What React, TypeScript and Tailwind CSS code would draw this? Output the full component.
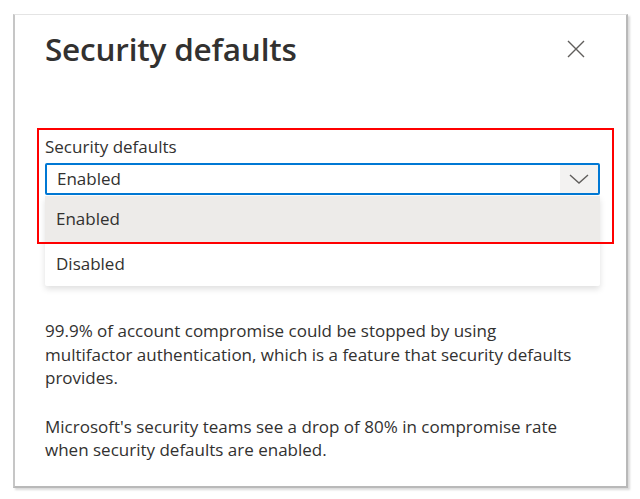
import React from "react";

export default function App() {
  const font = { fontFamily: '"Open Sans", "Noto Sans", Arial, sans-serif' };
  return (
    <div className="w-[640px] h-[499px] bg-white relative overflow-hidden" style={font}>
      <div className="absolute left-[13px] top-[14px] w-[615px] h-[474px] bg-white border-t border-t-[#e4e4e4] border-l-2 border-l-[#c6c6c6] border-r-2 border-r-[#b9b9b9] border-b-2 border-b-[#b9b9b9] shadow-[2px_2px_2px_rgba(0,0,0,0.15)] flex flex-col pl-[30px] pr-[26px] text-[#323130]">
        <div className="flex items-start justify-between pt-[13px]">
          <h1 className="text-[31.5px] leading-[42px] font-semibold tracking-[-0.2px]">Security defaults</h1>
          <button className="mt-[11px] mr-[14px] w-[20px] h-[20px] flex items-center justify-center">
            <svg width="18" height="18" viewBox="0 0 18 18" fill="none" stroke="#605e5c" strokeWidth="1.4">
              <path d="M1 1 L17 17 M17 1 L1 17" />
            </svg>
          </button>
        </div>
        <div className="mt-[66px] w-[555px] flex flex-col">
          <label className="text-[17px] leading-[22px]">Security defaults</label>
          <div className="mt-[5px] h-[32px] border-2 border-[#0078d4] rounded-[2px] flex items-stretch">
            <div className="flex-1 pl-[10px] flex items-center text-[17px]">Enabled</div>
            <div className="w-[38px] bg-[#f3f2f1] flex items-center justify-center">
              <svg width="20" height="10" viewBox="0 0 20 10" fill="none" stroke="#605e5c" strokeWidth="1.4">
                <path d="M1 1 L10 9 L19 1" />
              </svg>
            </div>
          </div>
          <div className="mt-[1px] bg-white shadow-[0_3px_6px_rgba(0,0,0,0.13)] rounded-[2px] flex flex-col">
            <div className="h-[46px] bg-[#edebe9] pl-[11px] flex items-center text-[17px]">Enabled</div>
            <div className="h-[44px] pl-[11px] flex items-center text-[17px]">Disabled</div>
          </div>
        </div>
        <p className="mt-[33px] w-[540px] text-[17px] leading-[23.5px]">
          99.9% of account compromise could be stopped by using multifactor authentication, which is a feature that security defaults provides.
        </p>
        <p className="mt-[25px] w-[540px] text-[17px] leading-[23.5px]">
          Microsoft's security teams see a drop of 80% in compromise rate when security defaults are enabled.
        </p>
      </div>
      <div className="absolute left-[37px] top-[128px] w-[577px] h-[116px] border-2 border-[#ff0000] pointer-events-none" />
    </div>
  );
}
